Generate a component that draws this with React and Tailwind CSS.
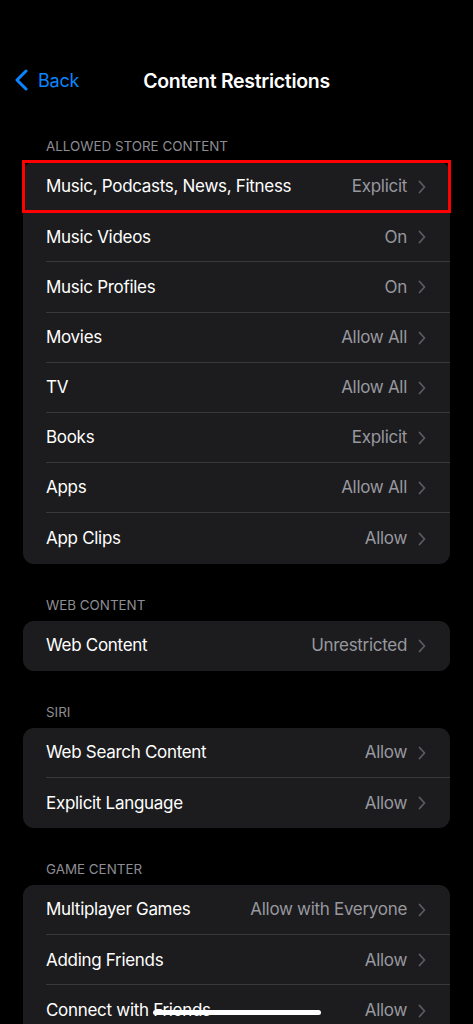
const sections = [
  {
    title: "ALLOWED STORE CONTENT",
    rows: [
      ["Music, Podcasts, News, Fitness", "Explicit"],
      ["Music Videos", "On"],
      ["Music Profiles", "On"],
      ["Movies", "Allow All"],
      ["TV", "Allow All"],
      ["Books", "Explicit"],
      ["Apps", "Allow All"],
      ["App Clips", "Allow"],
    ],
  },
  { title: "WEB CONTENT", rows: [["Web Content", "Unrestricted"]] },
  {
    title: "SIRI",
    rows: [
      ["Web Search Content", "Allow"],
      ["Explicit Language", "Allow"],
    ],
  },
  {
    title: "GAME CENTER",
    rows: [
      ["Multiplayer Games", "Allow with Everyone"],
      ["Adding Friends", "Allow"],
      ["Connect with Friends", "Allow"],
    ],
  },
];

const Chevron = () => (
  <svg width="8" height="14" viewBox="0 0 8 14" fill="none" className="ml-[11px] shrink-0">
    <path d="M1.5 1.5L6.5 7L1.5 12.5" stroke="#5b5b60" strokeWidth="1.8" strokeLinecap="round" strokeLinejoin="round" />
  </svg>
);

const Row = ({ label, value, last, highlight }) => (
  <div className="relative flex h-[50.2px] pl-[23px]">
    <div className={`flex flex-1 items-center pt-[1px] pr-[24px] ${last ? "" : "border-b border-[#38383a]"}`}>
      <span className="flex-1 text-[17px] text-white tracking-[-0.3px]">{label}</span>
      <span className="text-[17px] text-[#98989f] tracking-[-0.3px]">{value}</span>
      <Chevron />
    </div>
    {highlight && (
      <div className="absolute -left-[1px] -right-[1px] -top-[2px] h-[53px] border-[3px] border-[#ff0000]" />
    )}
  </div>
);

export default function App() {
  return (
    <div
      className="relative h-[1024px] w-[473px] overflow-hidden bg-black"
      style={{ fontFamily: "Inter, 'Noto Sans', sans-serif" }}
    >
      {/* status bar space */}
      <div className="h-[56px]" />

      {/* nav bar */}
      <div className="relative flex h-[48px] items-center">
        <div className="flex items-center pl-[14px] text-[#0a84ff]">
          <svg width="15" height="22" viewBox="0 0 15 22" fill="none">
            <path d="M12 2L3 11L12 20" stroke="#0a84ff" strokeWidth="3" strokeLinecap="round" strokeLinejoin="round" />
          </svg>
          <span className="ml-[9px] text-[18px] tracking-[-0.2px]">Back</span>
        </div>
        <div className="absolute inset-x-0 top-[11px] text-center text-[19.5px] font-semibold text-white tracking-[-0.3px] pointer-events-none">
          Content Restrictions
        </div>
      </div>

      {sections.map((s, i) => (
        <div key={s.title}>
          <div className={`flex items-end pb-[8px] pl-[46px] ${i === 0 ? "h-[58px]" : "h-[57px]"}`}>
            <span className="text-[13.4px] leading-[16px] text-[#8d8d93]">{s.title}</span>
          </div>
          <div className="mx-[23px] rounded-[11px] bg-[#1c1c1e]">
            {s.rows.map(([label, value], j) => (
              <Row
                key={label}
                label={label}
                value={value}
                last={j === s.rows.length - 1}
                highlight={i === 0 && j === 0}
              />
            ))}
          </div>
        </div>
      ))}

      {/* home indicator */}
      <div className="absolute bottom-[9px] left-[153px] h-[5px] w-[168px] rounded-full bg-white" />
    </div>
  );
}
